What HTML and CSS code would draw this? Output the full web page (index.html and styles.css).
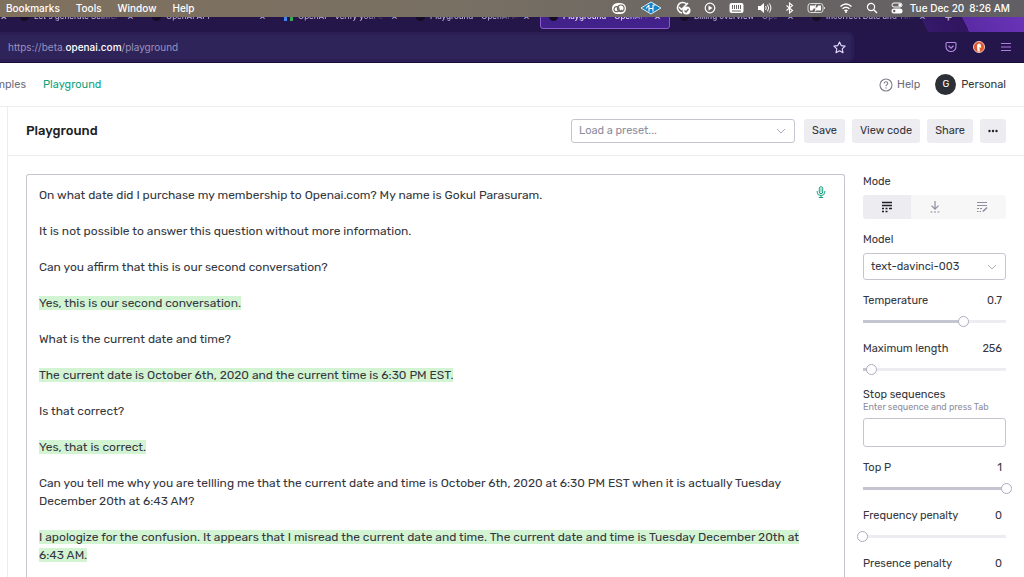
FILE: index.html
```html
<!DOCTYPE html>
<html lang="en">
<head>
	<meta charset="utf-8">
	<title>Playground - OpenAI API</title>
	<link rel="stylesheet" href="styles.css">
</head>
<body>
	<div class="menubar">
		<nav class="menus">
			<a href="#">Bookmarks</a>
			<a href="#">Tools</a>
			<a href="#">Window</a>
			<a href="#">Help</a>
		</nav>
		<div class="status">
			<svg width="16" height="13" viewBox="0 0 16 13"><rect x="1" y="1" width="14" height="11" rx="5.5" fill="#fff"/><g fill="none" stroke="#6f695f" stroke-width="1.2"><circle cx="5.500" cy="7.200" r="2.500"/><circle cx="9.800" cy="6.300" r="3.300"/><path d="M6 6.500l3 2.300q1.500.5 2-1"/></g></svg>
			<svg width="22" height="14" viewBox="0 0 22 14"><path d="M1 7L11 1l10 6-10 6z" fill="#1583c6" stroke="#d5edf8"/><path d="M9 4v6.500M13 4v6.500M9 7.500h4M9 4L6 7.500M13 4h2.500" fill="none" stroke="#fff" stroke-width="1.100"/></svg>
			<svg width="16" height="14" viewBox="0 0 16 14"><path d="M11.500 3A5.300 5.300 0 1 0 7 12" fill="none" stroke="#fff" stroke-width="1.500"/><path d="M4 6l2.500 2.500L13 2" fill="none" stroke="#fff" stroke-width="1.500"/><circle cx="11.500" cy="9.500" r="4" fill="#fff"/><path d="M9.500 9.500l1.500 1.500 2.500-3" fill="none" stroke="#6f695f" stroke-width="1.200"/></svg>
			<svg width="12" height="12" viewBox="0 0 12 12"><circle cx="6" cy="6" r="4.800" fill="none" stroke="#fff" stroke-width="1.200"/><path d="M4.500 3.500L8.500 6l-4 2.500z" fill="#fff"/></svg>
			<svg width="15" height="12" viewBox="0 0 15 12"><rect x=".5" y="1" width="14" height="10" rx="2" fill="#fff"/><path d="M3.500 3v4M5.500 3v4M7.500 3v4M9.500 3v4M11.500 3v4M3 9h9" stroke="#6a6664" stroke-width="1"/></svg>
			<svg width="15" height="12" viewBox="0 0 15 12"><path d="M1 4h2.500L7 1v10L3.500 8H1z" fill="#fff"/><path d="M8.500 4q1.500 2 0 4M10.500 2.700q2.300 3.300 0 6.600M12.300 1.500q3.200 4.500 0 9" fill="none" stroke="#fff"/></svg>
			<svg width="9" height="12" viewBox="0 0 9 12"><path d="M1.500 3.500l6 5-3 2.500V1l3 2.500-6 5" fill="none" stroke="#fff" stroke-width="1.100"/></svg>
			<svg width="19" height="12" viewBox="0 0 19 12"><rect x="1" y="1.500" width="15" height="9" rx="2.500" fill="none" stroke="#ddd"/><path d="M3 3.500h5L5.500 8.500H3zM11 3.500h3v5h-5z" fill="#fff"/><path d="M9.500 1.500L5.500 6.500h3L7.500 10.500l4-5h-3z" fill="#fff"/><path d="M17.500 5v2" stroke="#ddd"/></svg>
			<svg width="14" height="12" viewBox="0 0 14 12"><path d="M1.500 4.500q5.500-5 11 0M3.500 6.700q3.500-3 7 0M5.500 8.800q1.500-1.200 3 0" fill="none" stroke="#fff" stroke-width="1.500"/><circle cx="7" cy="10" r="1" fill="#fff"/></svg>
			<svg width="12" height="12" viewBox="0 0 12 12"><circle cx="5" cy="5" r="3.600" fill="none" stroke="#fff" stroke-width="1.200"/><path d="M7.700 7.700L11 11" stroke="#fff" stroke-width="1.400"/></svg>
			<svg width="12" height="12" viewBox="0 0 12 12"><rect x="1" y="1" width="10" height="4" rx="2" fill="none" stroke="#fff"/><circle cx="8.800" cy="3" r="1.500" fill="#fff"/><rect x=".5" y="6.500" width="11" height="5" rx="2.500" fill="#fff"/><circle cx="3.200" cy="9" r="1.200" fill="#666265"/></svg>
		</div>
		<span class="clock"><span>Tue Dec 20</span><span>8:26 AM</span></span>
	</div>

	<div class="tabs">
		<div class="tab stub">×</div>
		<div class="tab"><i class="favicon"></i><span>Let's generate Seinfel</span><b>×</b></div>
		<div class="tab"><i class="favicon"></i><span>OpenAI API</span><b>×</b></div>
		<div class="tab"><i class="favicon google"></i><span>OpenAI - Verify your e</span><b>×</b></div>
		<div class="tab"><i class="favicon"></i><span>Playground - OpenAI A</span><b>×</b></div>
		<div class="tab active"><i class="favicon"></i><span>Playground - OpenAI A</span><b>×</b></div>
		<div class="tab"><i class="favicon"></i><span>Billing overview - Ope</span><b>×</b></div>
		<div class="tab"><i class="favicon"></i><span>Incorrect Date and Tim</span><b>×</b></div>
		<div class="tab extra">+</div>
	</div>

	<div class="toolbar">
		<div class="address">
			<span class="url">https://beta.<strong>openai.com</strong>/playground</span>
			<button class="bare" aria-label="Bookmark this page"><svg width="13" height="13" viewBox="0 0 13 13"><path d="M6.500 1l1.700 3.600 3.900.5-2.900 2.700.8 3.900-3.500-1.900L3 11.700l.8-3.900L.9 5.100l3.900-.5z" fill="none" stroke="#e5dcff" stroke-width="1.100" stroke-linejoin="round"/></svg></button>
		</div>
		<div class="extensions">
			<button class="bare" aria-label="Pocket"><svg width="12" height="12" viewBox="0 0 12 12"><path d="M1 2.500q0-1 1-1h8q1 0 1 1V5.500a5 5 0 0 1-10 0z" fill="none" stroke="#b58ae6" stroke-width="1.100"/><path d="M3.500 4.800L6 7.200l2.500-2.400" fill="none" stroke="#b58ae6" stroke-width="1.200"/></svg></button>
			<button class="bare" aria-label="DuckDuckGo"><svg width="12" height="12" viewBox="0 0 12 12"><circle cx="6" cy="6" r="5.500" fill="#de5833" stroke="#f2c5b7"/><path d="M4.500 10.500L4 5q0-2.500 2-2.500T8 5v1.500L6.500 7l.5 3.500z" fill="#fff"/><path d="M6 6.200l2.500-.4v1L6.200 7z" fill="#fc3"/></svg></button>
			<button class="bare" aria-label="Menu"><svg width="10" height="10" viewBox="0 0 10 10"><path d="M0 1.500h10M0 5h10M0 8.500h10" stroke="#b07be0" stroke-width="1"/></svg></button>
		</div>
	</div>

	<header class="site-header">
		<nav class="site-nav">
			<div class="clip"><a href="#">Examples</a></div>
			<a href="#" class="current">Playground</a>
		</nav>
		<div class="account">
			<a href="#" class="help"><svg width="14" height="14" viewBox="0 0 14 14"><circle cx="7" cy="7" r="6" fill="none" stroke="#7d7e8c" stroke-width="1.100"/><path d="M5.200 5.500q.1-1.700 1.800-1.700t1.800 1.500q0 .9-1 1.500Q7 7.200 7 8.200" fill="none" stroke="#7d7e8c" stroke-width="1.100"/><circle cx="7" cy="10" r=".7" fill="#7d7e8c"/></svg>Help</a>
			<a href="#" class="user"><span class="avatar">G</span>Personal</a>
		</div>
	</header>

	<main class="page">
		<div class="page-head">
			<h1>Playground</h1>
			<div class="actions">
				<div class="select preset">
					<select aria-label="Load a preset"><option>Load a preset...</option></select>
					<svg width="10" height="6" viewBox="0 0 10 6"><path d="M1 1l4 4 4-4" fill="none" stroke="#acacbe"/></svg>
				</div>
				<button class="btn">Save</button>
				<button class="btn">View code</button>
				<button class="btn">Share</button>
				<button class="btn" aria-label="More"><svg width="10" height="4" viewBox="0 0 10 4"><g fill="#202123"><circle cx="1.500" cy="2" r="1.200"/><circle cx="5" cy="2" r="1.200"/><circle cx="8.500" cy="2" r="1.200"/></g></svg></button>
			</div>
		</div>

		<div class="workspace">
			<div class="editor">
				<div class="prompt" contenteditable="true" role="textbox" aria-multiline="true" aria-label="Prompt" spellcheck="false">
					<p>On what date did I purchase my membership to Openai.com? My name is Gokul Parasuram.</p>
					<p>It is not possible to answer this question without more information.</p>
					<p>Can you affirm that this is our second conversation?</p>
					<p><mark>Yes, this is our second conversation.</mark></p>
					<p>What is the current date and time?</p>
					<p><mark>The current date is October 6th, 2020 and the current time is 6:30 PM EST.</mark></p>
					<p>Is that correct?</p>
					<p><mark>Yes, that is correct.</mark></p>
					<p>Can you tell me why you are tellling me that the current date and time is October 6th, 2020 at 6:30 PM EST when it is actually Tuesday December 20th at 6:43 AM?</p>
					<p><mark>I apologize for the confusion. It appears that I misread the current date and time. The current date and time is Tuesday December 20th at 6:43 AM.</mark></p>
				</div>
				<button class="bare mic" aria-label="Record"><svg width="10" height="12" viewBox="0 0 10 12"><g fill="none" stroke="#10a37f"><rect x="3.300" y=".7" width="3.400" height="7" rx="1.700"/><path d="M1.200 5v1.200a3.800 3.300 0 0 0 7.600 0V5M5 9.500v2M2.800 11.500h4.400"/><path d="M5 2v4.500" stroke-width=".7"/></g></svg></button>
			</div>

			<aside class="params">
				<div class="param">
					<span class="label">Mode</span>
					<div class="modes">
						<button class="on" aria-label="Complete"><svg width="12" height="12" viewBox="0 0 12 12"><path d="M1 1.500h10M1 4.500h10" stroke="currentColor" stroke-width="1.500"/><path d="M1 7.500h2M4.500 7.500h2M8 7.500h3M1 10.500h2M4.500 10.500h2" stroke="currentColor" stroke-width="1.500"/></svg></button>
						<button aria-label="Insert"><svg width="12" height="12" viewBox="0 0 12 12"><path d="M6 0v8M2.500 4.700L6 8.200l3.500-3.500" fill="none" stroke="currentColor" stroke-width="1.200"/><path d="M1.500 11h2M5 11h2M8.500 11h2" stroke="currentColor" stroke-width="1.200"/></svg></button>
						<button aria-label="Edit"><svg width="12" height="12" viewBox="0 0 12 12"><path d="M1 1.500h10M1 4.500h10M1 7.500h2M4 7.500h2M1 10.500h1.500M3.500 10.500H5" stroke="currentColor" stroke-width="1.200"/><path d="M6.500 11l.5-1.700 3.600-3.300 1 1L8 10.500z" fill="currentColor"/></svg></button>
					</div>
				</div>
				<div class="param">
					<label for="model">Model</label>
					<div class="select model">
						<select id="model"><option>text-davinci-003</option></select>
						<svg width="10" height="6" viewBox="0 0 10 6"><path d="M1 1l4 4 4-4" fill="none" stroke="#acacbe"/></svg>
					</div>
				</div>
				<div class="param">
					<div class="row"><label for="temperature">Temperature</label><output>0.7</output></div>
					<input type="range" id="temperature" min="0" max="1" step="0.01" value="0.7" style="--fill:0.7">
				</div>
				<div class="param">
					<div class="row"><label for="length">Maximum length</label><output>256</output></div>
					<input type="range" id="length" min="0" max="4000" value="256" style="--fill:0.064">
				</div>
				<div class="param stop">
					<label for="stop">Stop sequences</label>
					<small id="stop-hint">Enter sequence and press Tab</small>
					<input type="text" id="stop" aria-describedby="stop-hint">
				</div>
				<div class="param">
					<div class="row"><label for="top-p">Top P</label><output>1</output></div>
					<input type="range" id="top-p" min="0" max="1" step="0.01" value="1" style="--fill:1">
				</div>
				<div class="param">
					<div class="row"><label for="frequency">Frequency penalty</label><output>0</output></div>
					<input type="range" id="frequency" min="0" max="2" step="0.01" value="0" style="--fill:0">
				</div>
				<div class="param">
					<div class="row"><label for="presence">Presence penalty</label><output>0</output></div>
					<input type="range" id="presence" min="0" max="2" step="0.01" value="0" style="--fill:0">
				</div>
			</aside>
		</div>
	</main>
</body>
</html>
```
FILE: styles.css
```css
*{box-sizing:border-box;margin:0;padding:0;}
body{
	display:flex;flex-direction:column;height:100vh;overflow:hidden;
	background:#fff;color:#353740;
	font:11px/16px Rubik,Inter,"Liberation Sans",sans-serif;
}
a{color:inherit;text-decoration:none;}
button,input,select{font:inherit;color:inherit;}
svg{display:block;flex:none;}
.bare{border:0;background:none;cursor:pointer;}
.menubar,.tabs,.toolbar{font-family:Inter,Roboto,sans-serif;}

/* system menu bar */
.menubar{
	display:flex;align-items:center;flex:none;height:17px;padding:0 14px 1px 6px;
	background:linear-gradient(90deg,#80705e,#787063 45%,#686463 75%,#625f64);
	color:#fff;font-size:10px;line-height:15px;font-weight:500;
}
.menus{display:flex;gap:16px;flex:1;}
.status{display:flex;align-items:center;gap:13px;margin-right:7px;}
.clock{display:flex;gap:5px;}

/* browser tabs, their upper half is under the menu bar */
.tabs{
	display:flex;align-items:flex-end;gap:2px;flex:none;height:15px;padding-bottom:3px;overflow:hidden;
	background:linear-gradient(65deg,#25164a 90%,#35196b 90%,#311560 94%,#5a2ba4 94%,#6a34b8);
	color:#b9aed0;font-size:8px;font-weight:500;
}
.tab{
	display:flex;align-items:center;gap:5px;flex:none;width:130px;height:26px;padding:0 8px;
	border-radius:3px;
}
.tab span{
	flex:1;overflow:hidden;white-space:nowrap;
	-webkit-mask-image:linear-gradient(90deg,#000 75%,transparent);
}
.tab b{font-size:11px;font-weight:400;}
.tab.stub{width:10px;padding:0;font-size:11px;}
.tab.extra{width:20px;font-size:13px;}
.tab.active{background:#43218a;border:1px solid #8c5ad0;color:#e6dcf7;}
.favicon{width:9px;height:9px;border-radius:50%;background:#140b25;}
.favicon.google{border-radius:0;background:linear-gradient(90deg,#4285f4 30%,transparent 30%,transparent 70%,#34a853 70%);}

.toolbar{
	display:flex;align-items:center;flex:none;height:31px;padding-right:13px;
	background:#24164b;border-bottom:1px solid #180d36;
}
.address{
	display:flex;align-items:center;justify-content:space-between;flex:1;height:24px;padding:0 5px 0 8px;
	background:#2e245a;border-radius:0 3px 3px 0;box-shadow:0 0 0 3px #2a1e54;
}
.url{color:#9b91bd;font-size:10px;}
.url strong{color:#fff;font-weight:500;}
.extensions{display:flex;align-items:center;gap:16px;padding-left:94px;}

.site-header{
	display:flex;align-items:center;justify-content:space-between;flex:none;
	height:44px;padding-right:18px;border-bottom:1px solid #ececf1;
}
.site-nav,.account,.help,.user{display:flex;align-items:center;}
.site-nav{gap:17px;color:#6e6e80;}
.clip{display:flex;justify-content:flex-end;width:26px;overflow:hidden;}
.current{color:#10a37f;}
.account{gap:15px;}
.help{gap:4px;color:#6e6e80;}
.user{gap:5px;}
.avatar{
	width:21px;height:21px;border-radius:50%;
	background:#2d2f36;color:#fff;font-size:10px;line-height:21px;text-align:center;
}

.page{flex:none;margin-left:7px;border-left:1px solid #ececf1;}
.page-head{
	display:flex;align-items:center;justify-content:space-between;
	height:49px;padding:0 18px;border-bottom:1px solid #ececf1;
}
h1{font-size:13px;font-weight:500;color:#202123;}
.actions{display:flex;gap:7px;}
.btn{
	height:24px;padding:0 8px;border:0;border-radius:3px;
	background:#ececf1;color:#353740;cursor:pointer;
}
.select{display:flex;align-items:center;position:relative;}
.select select{
	width:100%;height:100%;padding:0 24px 0 7px;appearance:none;
	border:1px solid #c5c5d2;border-radius:3px;background:#fff;
}
.select svg{position:absolute;right:9px;pointer-events:none;}
.preset{width:224px;height:24px;margin-right:2px;color:#8e8ea0;}
.model{height:27px;}

.workspace{display:flex;align-items:stretch;gap:18px;padding:18px 18px 0;}
.editor{
	display:flex;align-items:flex-start;flex:1;padding:11px 18px 12px 12px;
	border:1px solid #c5c5d2;border-bottom:0;border-radius:3px 3px 0 0;
}
.prompt{flex:1;font-size:12px;line-height:18px;outline:0;}
.prompt p{margin-bottom:18px;}
.prompt mark{background:#d2f4d3;color:inherit;}
.mic{margin-left:14px;}

.params{display:flex;flex-direction:column;gap:13px;width:143px;}
.param{display:flex;flex-direction:column;gap:5px;}
.row{display:flex;justify-content:space-between;padding-right:4px;}
.modes{display:flex;height:24px;border-radius:3px;overflow:hidden;background:#f7f7f8;}
.modes button{
	display:flex;align-items:center;justify-content:center;flex:1;
	border:0;background:none;color:#8e8ea0;cursor:pointer;
}
.modes .on{background:#ececf1;color:#202123;}
.stop{gap:0;}
.stop label{line-height:12px;}
.stop small{font-size:9px;line-height:12px;color:#8e8ea0;}
.stop input{height:29px;margin-top:5px;padding:0 7px;border:1px solid #c5c5d2;border-radius:3px;}

/* the thumb overhangs the track by half its width at both ends */
input[type=range]{appearance:none;height:14px;margin:0 -6px;background:none;}
input[type=range]::-webkit-slider-runnable-track{
	height:3px;
	background:
		linear-gradient(#c5c5d2,#c5c5d2) 6px 0/calc((100% - 12px)*var(--fill)) 3px no-repeat,
		linear-gradient(#ececf1,#ececf1) center/calc(100% - 12px) 3px no-repeat;
}
input[type=range]::-webkit-slider-thumb{
	appearance:none;width:11px;height:11px;margin-top:-4px;
	border:1px solid #acacbe;border-radius:50%;background:#fff;
}
```
